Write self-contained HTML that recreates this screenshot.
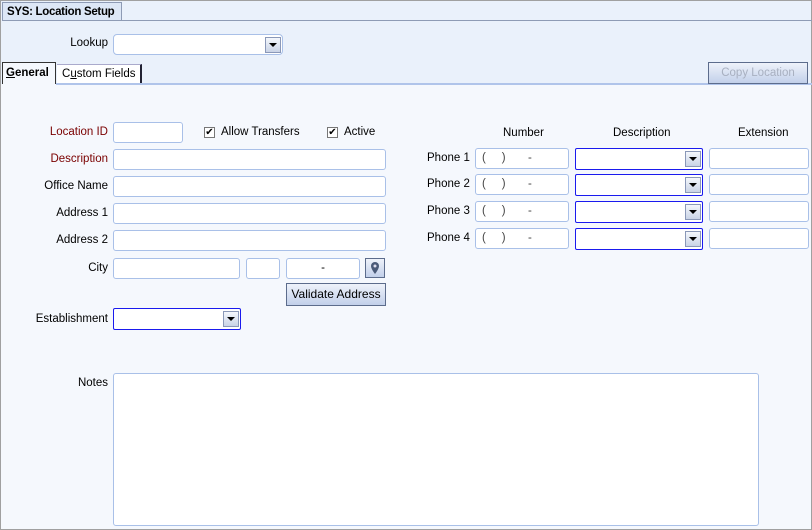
<html><head><style>
body{margin:0;width:812px;height:530px;overflow:hidden;background:#f5f8fd;font-family:"Liberation Sans",sans-serif;font-size:11.5px;color:#000;position:relative}
.a{position:absolute;white-space:nowrap}
.top{left:0;top:0;width:812px;height:84px;background:#eaf1fb}
.in{position:absolute;box-sizing:border-box;border:1px solid #a9c0e8;border-radius:3px;background:#fff;height:21px}
.cb{position:absolute;box-sizing:border-box;border:1px solid #1a1aee;border-radius:2px;background:#fff;height:22px}
.dd{position:absolute;right:1px;top:2px;width:16px;height:16px;box-sizing:border-box;border:1px solid #8a98b8;background:linear-gradient(#f4f7fc,#c9d3e6)}
.dd:after{content:"";position:absolute;left:3px;top:5px;border-left:4px solid transparent;border-right:4px solid transparent;border-top:4px solid #000}
.lb{position:absolute;text-align:right;width:100px;white-space:nowrap}
.red{color:#7a0000}
.btn{position:absolute;box-sizing:border-box;border:1px solid #5c6c8c;background:linear-gradient(#eef2fa,#c2d0ea);text-align:center;white-space:nowrap}
.chk{position:absolute;width:11px;height:11px;box-sizing:border-box;border:1px solid #777;background:#fff;font-size:10px;line-height:9px;text-align:center}
.ph{position:absolute;left:6px;top:3px;color:#444;white-space:pre}
</style></head><body>
<div class="a top"></div>
<div class="a" style="left:0;top:0;width:810px;height:528px;border:1px solid #a0a0a0"></div>
<div class="a" style="left:2px;top:20px;width:810px;height:1px;background:#8e9bb5"></div>
<div class="a" style="left:2px;top:2px;height:18px;border:1px solid #8e9bb5;border-bottom:none;background:#dde7f6;font-weight:bold;line-height:18px;padding-left:4px;box-sizing:border-box;width:120px;font-size:11.5px;letter-spacing:-0.3px">SYS: Location Setup</div>
<div class="lb" style="left:8px;top:37px">Lookup</div>
<div class="in" style="left:113px;top:34px;width:170px;height:21px;border-radius:4px"><div class="dd" style="top:2px"></div></div>
<div class="a" style="left:2px;top:62px;width:54px;height:22px;border:1px solid #333;border-bottom:none;background:#f5f8fd;box-sizing:border-box;font-weight:bold;padding:4px 0 0 3px"><u>G</u>eneral</div>
<div class="a" style="left:57px;top:64px;width:85px;height:19px;border-top:1px solid #aac;border-right:2px solid #223;background:#fff;box-sizing:border-box;padding:3px 0 0 5px">C<u>u</u>stom Fields</div>
<div class="a" style="left:56px;top:83px;width:756px;height:2px;background:#b0c4ea"></div>
<div class="btn" style="left:708px;top:62px;width:100px;height:22px;color:#a8b0c0;line-height:20px">Copy Location</div>

<div class="lb red" style="left:8px;top:126px">Location ID</div>
<div class="in" style="left:113px;top:122px;width:70px"></div>
<div class="chk" style="left:204px;top:127px">✔</div><div class="a" style="left:221px;top:126px">Allow Transfers</div>
<div class="chk" style="left:327px;top:127px">✔</div><div class="a" style="left:344px;top:126px">Active</div>
<div class="lb red" style="left:8px;top:153px">Description</div>
<div class="in" style="left:113px;top:149px;width:273px"></div>
<div class="lb" style="left:8px;top:180px">Office Name</div>
<div class="in" style="left:113px;top:176px;width:273px"></div>
<div class="lb" style="left:8px;top:207px">Address 1</div>
<div class="in" style="left:113px;top:203px;width:273px"></div>
<div class="lb" style="left:8px;top:234px">Address 2</div>
<div class="in" style="left:113px;top:230px;width:273px"></div>
<div class="lb" style="left:8px;top:262px">City</div>
<div class="in" style="left:113px;top:258px;width:127px"></div>
<div class="in" style="left:246px;top:258px;width:34px"></div>
<div class="in" style="left:286px;top:258px;width:74px;text-align:center;line-height:18px">-</div>
<div class="btn" style="left:365px;top:258px;width:20px;height:20px"><svg width="18" height="18" viewBox="0 0 18 18"><path d="M9 3a4 4 0 0 0-4 4c0 3 4 8 4 8s4-5 4-8a4 4 0 0 0-4-4z" fill="#4a5a78"/><circle cx="9" cy="7" r="1.5" fill="#dde"/></svg></div>
<div class="btn" style="left:286px;top:283px;width:100px;height:23px;line-height:21px;font-size:12px">Validate Address</div>
<div class="lb" style="left:8px;top:313px">Establishment</div>
<div class="cb" style="left:113px;top:308px;width:128px"><div class="dd"></div></div>
<div class="lb" style="left:8px;top:377px">Notes</div>
<div class="in" style="left:113px;top:373px;width:646px;height:153px"></div>

<div class="a" style="left:503px;top:127px">Number</div>
<div class="a" style="left:613px;top:127px">Description</div>
<div class="a" style="left:738px;top:127px">Extension</div>

<div class="a" style="left:427px;top:152px">Phone 1</div>
<div class="in" style="left:475px;top:148px;width:94px"><span class="ph">(     )       -</span></div>
<div class="cb" style="left:575px;top:148px;width:128px"><div class="dd"></div></div>
<div class="in" style="left:709px;top:148px;width:100px"></div>
<div class="a" style="left:427px;top:178px">Phone 2</div>
<div class="in" style="left:475px;top:174px;width:94px"><span class="ph">(     )       -</span></div>
<div class="cb" style="left:575px;top:174px;width:128px"><div class="dd"></div></div>
<div class="in" style="left:709px;top:174px;width:100px"></div>
<div class="a" style="left:427px;top:205px">Phone 3</div>
<div class="in" style="left:475px;top:201px;width:94px"><span class="ph">(     )       -</span></div>
<div class="cb" style="left:575px;top:201px;width:128px"><div class="dd"></div></div>
<div class="in" style="left:709px;top:201px;width:100px"></div>
<div class="a" style="left:427px;top:232px">Phone 4</div>
<div class="in" style="left:475px;top:228px;width:94px"><span class="ph">(     )       -</span></div>
<div class="cb" style="left:575px;top:228px;width:128px"><div class="dd"></div></div>
<div class="in" style="left:709px;top:228px;width:100px"></div>
</body></html>
